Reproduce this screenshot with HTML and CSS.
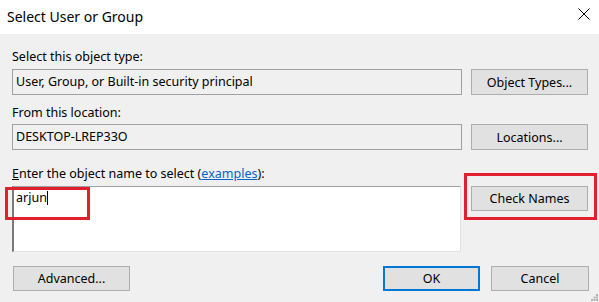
FILE: index.html
```html
<!DOCTYPE html>
<html lang="en">
<head>
    <meta charset="UTF-8">
    <title>Select User or Group</title>
    <link rel="stylesheet" href="styles.css">
</head>
<body>
    <div class="dialog">
        <div class="titlebar">
            <span class="title">Select User or Group</span>
            <svg class="close" width="12" height="12" viewBox="0 0 12 12">
                <path d="M0.5 0.5 L11.5 11.5 M11.5 0.5 L0.5 11.5" stroke="#000" stroke-width="1" fill="none"/>
            </svg>
        </div>

        <div class="content">
            <div class="label">Select this object type:</div>
            <div class="row">
                <div class="field">User, Group, or Built-in security principal</div>
                <button class="btn btn-side">Object Types...</button>
            </div>

            <div class="label label-gap">From this location:</div>
            <div class="row">
                <div class="field">DESKTOP-LREP33O</div>
                <button class="btn btn-side">Locations...</button>
            </div>

            <div class="label label-gap-lg"><u>E</u>nter the object name to select (<a href="#">examples</a>):</div>
            <div class="row row-names">
                <div class="names">
                    arjun<span class="caret"></span>
                    <span class="mark mark-name"></span>
                </div>
                <div class="check-wrap">
                    <button class="btn btn-side btn-short">Check Names</button>
                    <span class="mark mark-check"></span>
                </div>
            </div>

            <div class="footer">
                <button class="btn btn-advanced">Advanced...</button>
                <div class="actions">
                    <button class="btn btn-ok">OK</button>
                    <button class="btn btn-cancel">Cancel</button>
                </div>
            </div>
        </div>

        <svg class="grip" width="7" height="7" viewBox="0 0 7 7">
            <rect x="5" y="0" width="2" height="2" fill="#b4b4b4"/>
            <rect x="2.5" y="2.5" width="2" height="2" fill="#b4b4b4"/>
            <rect x="5" y="2.5" width="2" height="2" fill="#b4b4b4"/>
            <rect x="0" y="5" width="2" height="2" fill="#b4b4b4"/>
            <rect x="2.5" y="5" width="2" height="2" fill="#b4b4b4"/>
            <rect x="5" y="5" width="2" height="2" fill="#b4b4b4"/>
        </svg>
    </div>
</body>
</html>
```

FILE: styles.css
```css
html, body {
    margin: 0;
    padding: 0;
    height: 302px;
    overflow: hidden;
}
body {
    font-family: "Noto Sans", "Liberation Sans", sans-serif;
    font-size: 12.5px;
    color: #000;
    background-color: #f0f0f0;
}
.dialog {
    position: relative;
    height: 302px;
}
.titlebar {
    height: 34px;
    background-color: #fff;
    display: flex;
    align-items: center;
    justify-content: space-between;
    padding: 0 9px 0 7px;
}
.title {
    font-size: 14px;
    margin-top: -2px;
}
.close {
    margin-top: -6px;
}
.content {
    padding: 15px 11px 0 12px;
}
.label {
    height: 16px;
    line-height: 16px;
    margin-bottom: 4px;
}
.label-gap {
    margin-top: 10px;
    margin-bottom: 3px;
}
.label-gap-lg {
    margin-top: 16px;
    margin-bottom: 4px;
}
.label a {
    color: #0066cc;
}
.row {
    display: flex;
    align-items: center;
    gap: 9px;
}
.field {
    flex: 1;
    height: 26px;
    box-sizing: border-box;
    border: 1px solid #a0a0a0;
    background-color: #f0f0f0;
    padding: 0 3px;
    line-height: 24px;
}
.btn {
    font-family: inherit;
    font-size: 12.5px;
    color: #000;
    background-color: #e1e1e1;
    border: 1px solid #adadad;
    box-sizing: border-box;
    height: 25px;
    padding: 0;
    border-radius: 0;
}
.btn-side {
    width: 117px;
    height: 26px;
}
.btn-short {
    height: 25px;
}
.row-names {
    align-items: flex-start;
}
.names {
    position: relative;
    flex: 1;
    height: 66px;
    box-sizing: border-box;
    background-color: #fff;
    border-top: 1px solid #a0a0a0;
    border-left: 2px solid #7a7a7a;
    border-right: 1px solid #e3e3e3;
    border-bottom: 1px solid #e3e3e3;
    padding: 3px 2px;
    line-height: 16px;
    margin-right: 1px;
}
.caret {
    display: inline-block;
    width: 1px;
    height: 14px;
    background-color: #000;
    vertical-align: -3px;
}
.check-wrap {
    position: relative;
}
.mark {
    position: absolute;
    border: 3px solid #e0202e;
    box-sizing: border-box;
}
.mark-name {
    left: -9px;
    top: 0;
    width: 85px;
    height: 33px;
}
.mark-check {
    left: -7px;
    top: -13px;
    width: 133px;
    height: 47px;
}
.footer {
    margin-top: 14px;
    display: flex;
    justify-content: space-between;
    align-items: center;
}
.btn-advanced {
    width: 117px;
    margin-left: 1px;
}
.actions {
    display: flex;
    gap: 11px;
}
.btn-ok {
    width: 97px;
    border: 2px solid #0078d7;
}
.btn-cancel {
    width: 98px;
    margin-right: -1px;
}
.grip {
    position: absolute;
    right: 1px;
    bottom: 1px;
}
```
